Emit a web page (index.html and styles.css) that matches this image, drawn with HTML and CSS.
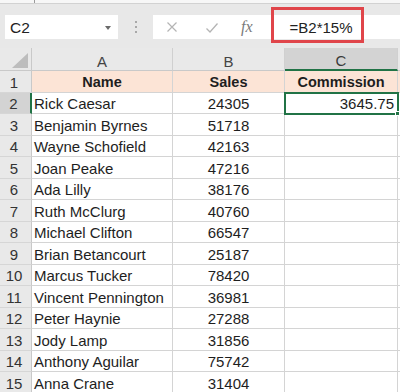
FILE: index.html
```html
<!DOCTYPE html>
<html>
<head>
<meta charset="utf-8">
<link rel="stylesheet" href="styles.css">
</head>
<body>
<div class="app">
  <div class="topstrip"><span class="tick"></span></div>
  <div class="toolbar">
    <div class="namebox">
      <span class="nb-text">C2</span>
      <span class="nb-arrow"></span>
    </div>
    <div class="dots"><i></i><i></i><i></i></div>
    <div class="fbar">
      <svg class="ico ico-x" width="12" height="12" viewBox="0 0 12 12"><path d="M1.5 1.5 L10.5 10.5 M10.5 1.5 L1.5 10.5" stroke="#b4b4b4" stroke-width="1.2" fill="none"/></svg>
      <svg class="ico ico-check" width="14" height="12" viewBox="0 0 14 12"><path d="M1.5 6.5 L5 10 L12.5 1.5" stroke="#b4b4b4" stroke-width="1.3" fill="none"/></svg>
      <span class="fx">fx</span>
      <span class="formula">=B2*15%</span>
      <span class="redbox"></span>
    </div>
  </div>
  <div class="sheet">
    <div class="corner"><span class="tri"></span></div>
    <div class="colhead">A</div>
    <div class="colhead">B</div>
    <div class="colhead sel">C</div>
    <div class="colhead rest"></div>

    <div class="rowhead">1</div>
    <div class="cell hdr">Name</div>
    <div class="cell hdr">Sales</div>
    <div class="cell hdr">Commission</div>
    <div class="cell hdr rest"></div>

    <div class="rowhead sel">2</div>
    <div class="cell name">Rick Caesar</div>
    <div class="cell num">24305</div>
    <div class="cell res active">3645.75</div>
    <div class="cell rest"></div>

    <div class="rowhead">3</div><div class="cell name">Benjamin Byrnes</div><div class="cell num">51718</div><div class="cell"></div><div class="cell rest"></div>
    <div class="rowhead">4</div><div class="cell name">Wayne Schofield</div><div class="cell num">42163</div><div class="cell"></div><div class="cell rest"></div>
    <div class="rowhead">5</div><div class="cell name">Joan Peake</div><div class="cell num">47216</div><div class="cell"></div><div class="cell rest"></div>
    <div class="rowhead">6</div><div class="cell name">Ada Lilly</div><div class="cell num">38176</div><div class="cell"></div><div class="cell rest"></div>
    <div class="rowhead">7</div><div class="cell name">Ruth McClurg</div><div class="cell num">40760</div><div class="cell"></div><div class="cell rest"></div>
    <div class="rowhead">8</div><div class="cell name">Michael Clifton</div><div class="cell num">66547</div><div class="cell"></div><div class="cell rest"></div>
    <div class="rowhead">9</div><div class="cell name">Brian Betancourt</div><div class="cell num">25187</div><div class="cell"></div><div class="cell rest"></div>
    <div class="rowhead">10</div><div class="cell name">Marcus Tucker</div><div class="cell num">78420</div><div class="cell"></div><div class="cell rest"></div>
    <div class="rowhead">11</div><div class="cell name">Vincent Pennington</div><div class="cell num">36981</div><div class="cell"></div><div class="cell rest"></div>
    <div class="rowhead">12</div><div class="cell name">Peter Haynie</div><div class="cell num">27288</div><div class="cell"></div><div class="cell rest"></div>
    <div class="rowhead">13</div><div class="cell name">Jody Lamp</div><div class="cell num">31856</div><div class="cell"></div><div class="cell rest"></div>
    <div class="rowhead">14</div><div class="cell name">Anthony Aguilar</div><div class="cell num">75742</div><div class="cell"></div><div class="cell rest"></div>
    <div class="rowhead">15</div><div class="cell name">Anna Crane</div><div class="cell num">31404</div><div class="cell"></div><div class="cell rest"></div>
  </div>
</div>
</body>
</html>
```

FILE: styles.css
```css
html, body {
  margin: 0;
  padding: 0;
  background: #ffffff;
}
body {
  width: 400px;
  height: 392px;
  overflow: hidden;
  font-family: "Liberation Sans", Arial, sans-serif;
  font-size: 15px;
  color: #1e1e1e;
}
.app {
  width: 400px;
  height: 392px;
  overflow: hidden;
  background: #e8e8e8;
}
.topstrip {
  height: 3px;
  background: #f7f7f7;
  border-bottom: 1px solid #d2d2d2;
  position: relative;
}
.tick {
  position: absolute;
  left: 34px;
  top: 0;
  width: 1px;
  height: 3px;
  background: #9a9a9a;
}
.toolbar {
  height: 44px;
  display: flex;
  align-items: flex-start;
  padding-top: 11px;
  box-sizing: border-box;
}
.namebox {
  margin-left: 5px;
  width: 113px;
  height: 24px;
  background: #ffffff;
  display: flex;
  align-items: center;
  justify-content: space-between;
  box-sizing: border-box;
  padding: 1px 7px 0 5px;
}
.nb-text {
  color: #222;
  font-size: 15.5px;
}
.nb-arrow {
  width: 0;
  height: 0;
  border-left: 3.5px solid transparent;
  border-right: 3.5px solid transparent;
  border-top: 4px solid #6a6a6a;
}
.dots {
  width: 35px;
  height: 24px;
  display: flex;
  flex-direction: column;
  align-items: center;
  justify-content: center;
  gap: 3px;
}
.dots i {
  display: block;
  width: 2px;
  height: 2px;
  background: #a8a8a8;
}
.fbar {
  flex: 1;
  height: 24px;
  background: #ffffff;
  display: flex;
  align-items: center;
  position: relative;
}
.ico-x {
  margin-left: 13px;
}
.ico-check {
  margin-left: 27px;
  margin-top: 2px;
}
.fx {
  margin-left: 22px;
  font-family: "Liberation Serif", "Times New Roman", serif;
  font-style: italic;
  font-size: 16px;
  color: #7a7a7a;
}
.formula {
  margin-left: 37px;
  padding-top: 1px;
  font-size: 15px;
  color: #222;
}
.redbox {
  position: absolute;
  left: 118px;
  top: -8px;
  width: 93px;
  height: 36px;
  box-sizing: border-box;
  border: 3.5px solid #e0454a;
}
.sheet {
  display: grid;
  grid-template-columns: 32px 141px 112px 113px 2px;
  grid-template-rows: 23px;
  grid-auto-rows: 21.5px;
  background: #ffffff;
}
.corner {
  background: #e9e9e9;
  border-right: 1px solid #c9c9c9;
  border-bottom: 1px solid #c9c9c9;
  position: relative;
}
.tri {
  position: absolute;
  right: 3px;
  bottom: 2px;
  width: 0;
  height: 0;
  border-left: 16px solid transparent;
  border-bottom: 15px solid #bdbdbd;
}
.colhead {
  background: #e9e9e9;
  color: #444;
  display: flex;
  align-items: center;
  justify-content: center;
  border-right: 1px solid #d0d0d0;
  border-bottom: 1px solid #c9c9c9;
  padding-top: 4px;
  box-sizing: border-box;
}
.colhead.sel {
  background: #d3d3d3;
  color: #3a3a3a;
  border-bottom: 2px solid #217346;
}
.colhead.rest {
  border-right: none;
}
.rowhead {
  background: #e9e9e9;
  color: #333;
  display: flex;
  align-items: center;
  justify-content: center;
  border-right: 1px solid #c9c9c9;
  border-bottom: 1px solid #d6d6d6;
  box-sizing: border-box;
  padding: 2px 3px 0 0;
}
.rowhead.sel {
  background: #d3d3d3;
  border-right: 2px solid #217346;
}
.cell {
  display: flex;
  align-items: center;
  border-right: 1px solid #d4d4d4;
  border-bottom: 1px solid #d4d4d4;
  box-sizing: border-box;
  white-space: nowrap;
  overflow: visible;
  color: #1e1e1e;
  padding-top: 2px;
}
.cell.rest {
  border-right: none;
}
.cell.hdr {
  background: #fce4d6;
  font-weight: bold;
  justify-content: center;
  font-size: 14.5px;
}
.name {
  padding-left: 2px;
}
.num {
  justify-content: center;
}
.res {
  justify-content: flex-end;
  padding-right: 3px;
}
.active {
  position: relative;
  outline: 2px solid #217346;
  outline-offset: -1px;
}
.active::after {
  content: "";
  position: absolute;
  right: -3px;
  bottom: -3px;
  width: 5px;
  height: 5px;
  background: #217346;
  border: 1px solid #ffffff;
  box-sizing: border-box;
}
```
